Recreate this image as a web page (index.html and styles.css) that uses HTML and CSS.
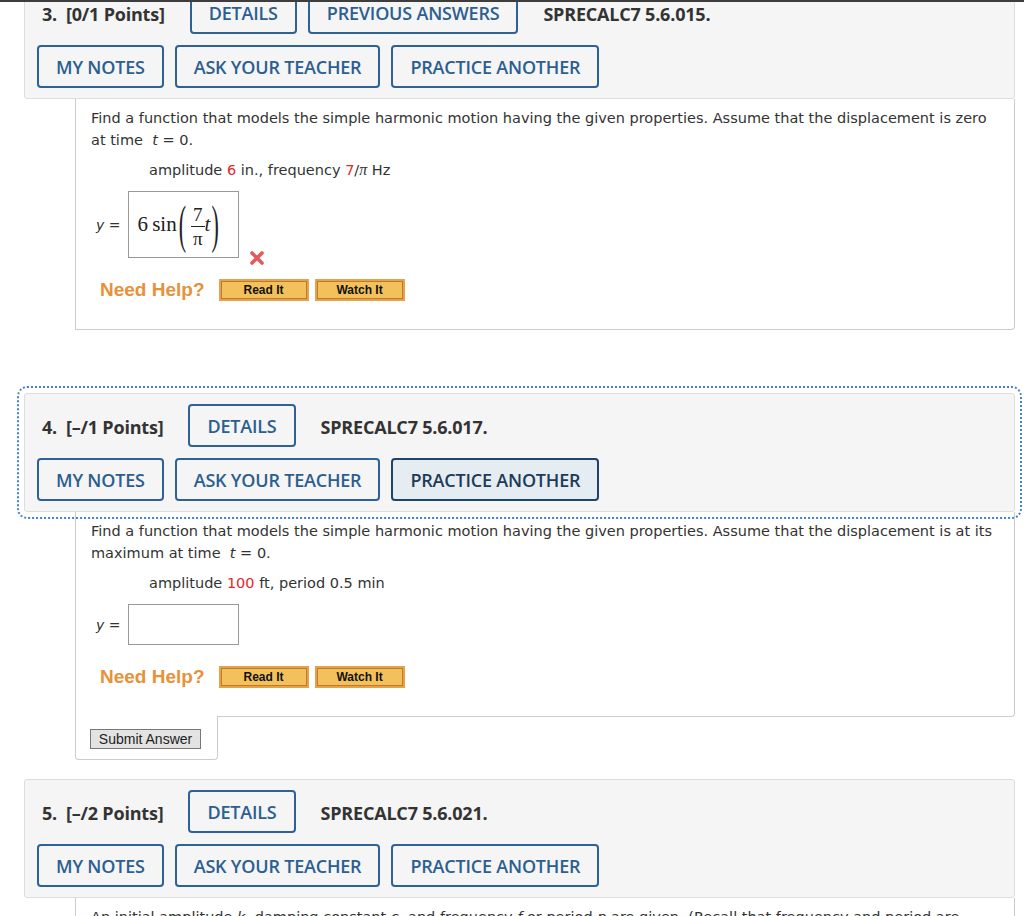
FILE: index.html
```html
<!DOCTYPE html>
<html lang="en">
<head>
    <meta charset="UTF-8">
    <meta name="viewport" content="width=device-width, initial-scale=1.0">
    <title>Assignment</title>
    <link rel="stylesheet" href="styles.css">
</head>
<body>
    <div class="top-edge"></div>

    <div class="questions">
        <!-- question 3 -->
        <div class="question answered">
            <div class="q-header">
                <div class="q-row">
                    <span class="q-num">3.&nbsp; [0/1 Points]</span>
                    <button class="q-btn">DETAILS</button>
                    <button class="q-btn">PREVIOUS ANSWERS</button>
                    <span class="q-code">SPRECALC7 5.6.015.</span>
                </div>
                <div class="q-row">
                    <button class="q-btn">MY NOTES</button>
                    <button class="q-btn">ASK YOUR TEACHER</button>
                    <button class="q-btn">PRACTICE ANOTHER</button>
                </div>
            </div>
            <div class="q-body">
                <p>Find a function that models the simple harmonic motion having the given properties. Assume that the displacement is zero at time&nbsp; <i class="mvar">t</i> = 0.</p>
                <p class="given">amplitude <span class="red">6</span> in., frequency <span class="red">7</span>/<i class="pi">π</i> Hz</p>
                <div class="answer-row">
                    <span class="lhs"><i>y</i> =</span>
                    <div class="answer-box filled">
                        <span class="mn">6&thinsp;sin</span>
                        <span class="paren">(</span>
                        <span class="frac"><span class="numer">7</span><span class="denom">π</span></span>
                        <span class="mi">t</span>
                        <span class="paren">)</span>
                    </div>
                    <svg class="wrong" width="16" height="16" viewBox="0 0 16 16">
                        <path d="M3 3 L13 13 M13 3 L3 13" stroke="#e45a5c" stroke-width="3.6" stroke-linecap="round"/>
                    </svg>
                </div>
                <div class="help-row">
                    <span class="need-help">Need Help?</span>
                    <button class="help-btn">Read It</button>
                    <button class="help-btn">Watch It</button>
                </div>
            </div>
        </div>

        <!-- question 4 -->
        <div class="question">
            <div class="q-header focused">
                <div class="q-row">
                    <span class="q-num">4.&nbsp; [–/1 Points]</span>
                    <button class="q-btn">DETAILS</button>
                    <span class="q-code">SPRECALC7 5.6.017.</span>
                </div>
                <div class="q-row">
                    <button class="q-btn">MY NOTES</button>
                    <button class="q-btn">ASK YOUR TEACHER</button>
                    <button class="q-btn hover">PRACTICE ANOTHER</button>
                </div>
            </div>
            <div class="q-body">
                <p>Find a function that models the simple harmonic motion having the given properties. Assume that the displacement is at its maximum at time&nbsp; <i class="mvar">t</i> = 0.</p>
                <p class="given">amplitude <span class="red">100</span> ft, period 0.5 min</p>
                <div class="answer-row">
                    <span class="lhs"><i>y</i> =</span>
                    <div class="answer-box empty"></div>
                </div>
                <div class="help-row">
                    <span class="need-help">Need Help?</span>
                    <button class="help-btn">Read It</button>
                    <button class="help-btn">Watch It</button>
                </div>
            </div>
            <div class="q-submit">
                <button class="submit-btn">Submit Answer</button>
            </div>
        </div>

        <!-- question 5 -->
        <div class="question">
            <div class="q-header">
                <div class="q-row">
                    <span class="q-num">5.&nbsp; [–/2 Points]</span>
                    <button class="q-btn">DETAILS</button>
                    <span class="q-code">SPRECALC7 5.6.021.</span>
                </div>
                <div class="q-row">
                    <button class="q-btn">MY NOTES</button>
                    <button class="q-btn">ASK YOUR TEACHER</button>
                    <button class="q-btn">PRACTICE ANOTHER</button>
                </div>
            </div>
            <div class="q-body">
                <p>An initial amplitude <i class="mvar">k</i>, damping constant <i class="mvar">c</i>, and frequency <i class="mvar">f</i> or period <i class="mvar">p</i> are given. (Recall that frequency and period are related by the following equation: <i class="mvar">f</i> = 1/<i class="mvar">p</i>.)</p>
            </div>
        </div>
    </div>
</body>
</html>
```

FILE: styles.css
```css
body {
    margin: 0;
    background: #fff;
    font-family: "DejaVu Sans", Verdana, sans-serif;
    color: #333;
}

.top-edge {
    position: fixed;
    top: 0;
    left: 0;
    right: 0;
    height: 2px;
    background: #3d3d3d;
    z-index: 5;
}

.questions {
    margin: -20px 9px 0 24px;
}

.question {
    margin-bottom: 19px;
}

.question.answered {
    margin-bottom: 63px;
}

/* header */
.q-header {
    background: #f5f5f5;
    border: 1px solid #ddd;
    border-radius: 3px;
    padding: 10px 12px;
    display: flex;
    flex-direction: column;
    gap: 11px;
}

.q-header.focused {
    outline: 2px dotted #3f80d8;
    outline-offset: 5px;
}

.q-row {
    display: flex;
    align-items: center;
    gap: 11px;
}

.q-num,
.q-code {
    font-family: "Open Sans", sans-serif;
    font-weight: 700;
    font-size: 18px;
    color: #333;
    letter-spacing: -0.2px;
    padding-top: 2px;
}

.q-num {
    margin-left: 5px;
    margin-right: 14px;
}

.q-code {
    margin-left: 14px;
}

.q-btn {
    font-family: "Open Sans", sans-serif;
    font-weight: 600;
    font-size: 18px;
    line-height: 23px;
    letter-spacing: -0.2px;
    color: #2c5e90;
    background: transparent;
    border: 2px solid #2f6294;
    border-radius: 4px;
    padding: 9px 17px 7px;
    cursor: pointer;
}

.q-btn.hover {
    background: #e6edf2;
    border-color: #1e4468;
    color: #1d3b58;
}

/* body */
.q-body {
    margin-left: 51px;
    background: #fff;
    border: 1px solid #ccc;
    border-top: none;
    border-radius: 0 0 4px 0;
    padding: 8px 16px 28px 15px;
}

.q-body p {
    margin: 0;
    font-size: 14.5px;
    line-height: 22px;
}

.q-body p.given {
    margin-top: 8px;
    padding-left: 58px;
}

.mvar {
    font-family: "DejaVu Sans", sans-serif;
    font-style: italic;
}

.pi {
    font-family: "Liberation Serif", serif;
    font-style: italic;
    font-size: 16px;
}

.red {
    color: #e8261f;
}

.answer-row {
    display: flex;
    align-items: center;
    margin-top: 10px;
}

.lhs {
    font-size: 14px;
    margin-left: 5px;
    margin-right: 8px;
}

.answer-box {
    width: 109px;
    border: 1px solid #999;
    background: #fff;
}

.answer-box.empty {
    height: 39px;
}

.answer-box.filled {
    height: 65px;
    display: flex;
    align-items: center;
    padding-left: 8px;
    width: 101px;
    font-family: "Liberation Serif", serif;
    font-size: 21px;
    color: #222;
}

.mn {
    margin-right: 1px;
}

.paren {
    display: inline-block;
    font-size: 22px;
    transform: scale(1, 2.4);
    margin: 0 1px;
}

.frac {
    display: inline-flex;
    flex-direction: column;
    align-items: center;
    font-size: 19px;
    line-height: 19px;
    margin: 4px 0 0 4px;
}

.frac .numer {
    border-bottom: 1px solid #222;
    padding: 0 2px 2px;
}

.frac .denom {
    padding-top: 2px;
}

.mi {
    font-style: italic;
    font-size: 21px;
}

.wrong {
    align-self: flex-end;
    margin: 0 0 -8px 10px;
}

/* help */
.help-row {
    display: flex;
    align-items: center;
    margin-top: 21px;
    padding-left: 9px;
}

.need-help {
    font-family: "Liberation Sans", Arial, sans-serif;
    font-weight: 700;
    font-size: 19px;
    color: #e8913a;
    margin-right: 14px;
}

.help-btn {
    font-family: "Liberation Sans", Arial, sans-serif;
    font-weight: 700;
    font-size: 12px;
    color: #111;
    background: #f3c15c;
    border: 2px solid #e5a14b;
    box-shadow: inset 0 0 0 1px #c07a25;
    height: 22px;
    width: 90px;
    padding: 0;
    margin-right: 6px;
    cursor: pointer;
}

/* submit */
.q-submit {
    margin: -1px 0 0 51px;
    width: 127px;
    background: #fff;
    border: 1px solid #ccc;
    border-top: none;
    border-radius: 0 0 4px 4px;
    padding: 13px 0 10px 14px;
}

.submit-btn {
    font-family: "Liberation Sans", Arial, sans-serif;
    font-size: 14px;
    color: #222;
    background: #e3e3e3;
    border: 1px solid #777;
    height: 20px;
    width: 111px;
    padding: 0;
}
```
